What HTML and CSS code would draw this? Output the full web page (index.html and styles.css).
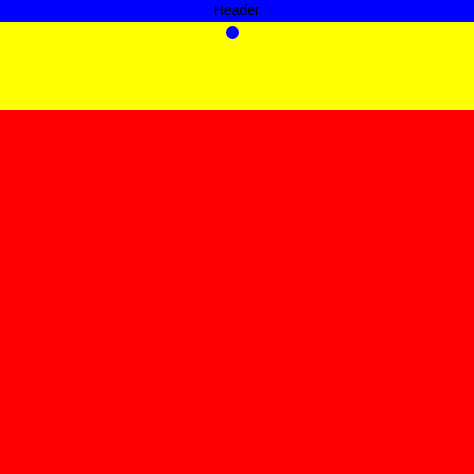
FILE: index.html
```html
<!DOCTYPE html>
<html>
<head>
<meta charset="utf-8">
<link rel="stylesheet" href="styles.css">
</head>
<body>
<div class="header">Header</div>
<div class="band"><div class="dot"></div></div>
<div class="main"></div>
</body>
</html>
```
FILE: styles.css
```css
html, body { margin: 0; padding: 0; height: 100%; }
body { background: #ff0000; font-family: "Liberation Sans", Arial, sans-serif; }
.header { height: 22px; background: #0000ff; color: #000; font-size: 14px; line-height: 20px; text-align: center; }
.band { height: 88px; background: #ffff00; padding-top: 4px; padding-left: 226px; box-sizing: border-box; }
.dot { width: 13px; height: 13px; border-radius: 50%; background: #0000ff; }
.main { background: #ff0000; }
```
